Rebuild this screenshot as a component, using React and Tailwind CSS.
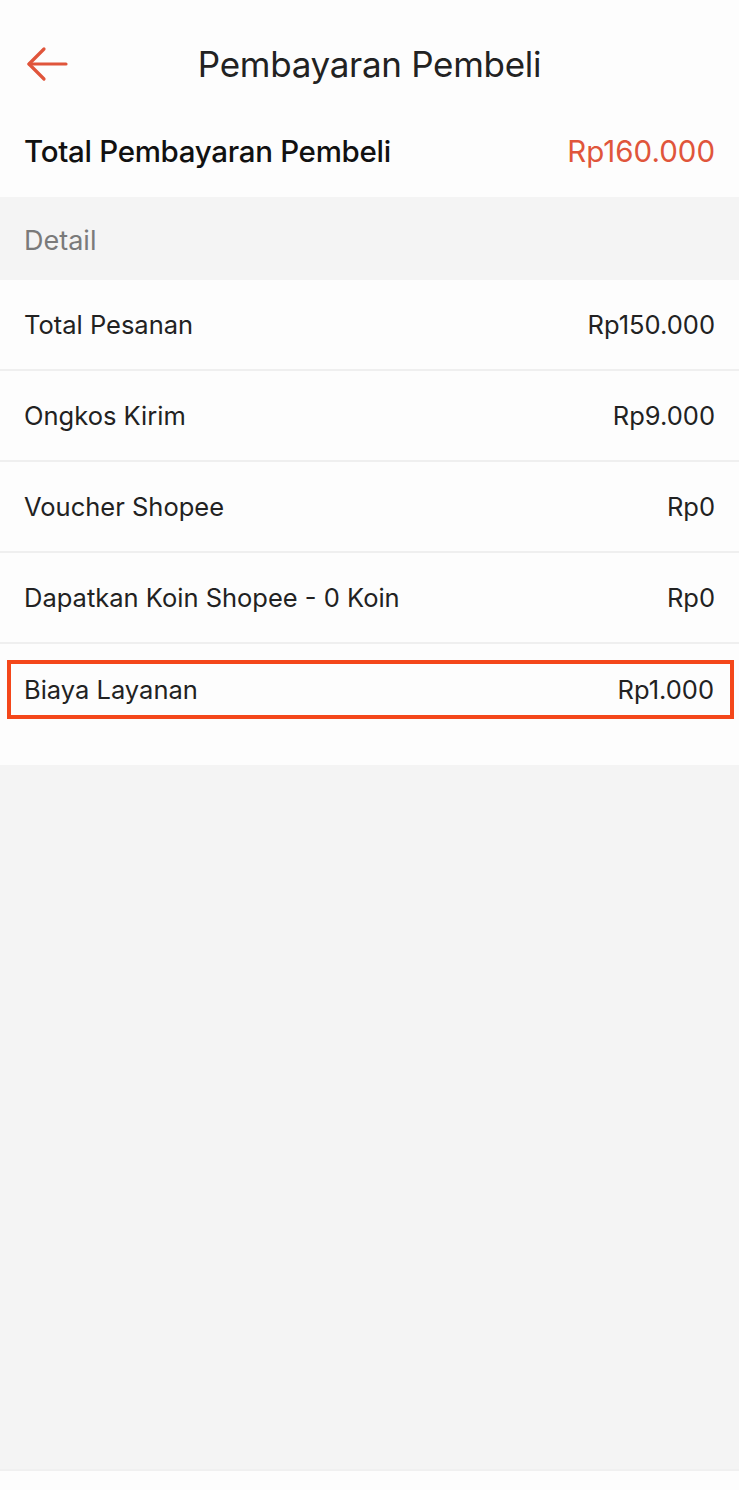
export default function App() {
  const rows = [
    ["Total Pesanan", "Rp150.000"],
    ["Ongkos Kirim", "Rp9.000"],
    ["Voucher Shopee", "Rp0"],
    ["Dapatkan Koin Shopee - 0 Koin", "Rp0"],
  ];
  return (
    <div className="w-[739px] h-[1490px] flex flex-col bg-[#f4f4f4] text-[#222]" style={{ fontFamily: "Inter, 'Noto Sans', sans-serif" }}>
      <div className="bg-[#fdfdfd] flex flex-col">
        <div className="relative h-[106px] pt-[44px] flex justify-center">
          <svg className="absolute left-[24px] top-[45px]" width="46" height="38" viewBox="0 0 46 38" fill="none" stroke="#e0553b" strokeWidth="3.2" strokeLinecap="round" strokeLinejoin="round">
            <path d="M42 19H5" />
            <path d="M20 4L5 19l15 15" />
          </svg>
          <span className="text-[35px] leading-[40px] text-[#222] tracking-[-0.3px]">Pembayaran Pembeli</span>
        </div>
        <div className="flex items-center justify-between px-[24px] h-[91px]">
          <span className="text-[29.5px] font-medium leading-none tracking-[-0.3px] text-[#111]">Total Pembayaran Pembeli</span>
          <span className="text-[29.5px] leading-none text-[#e0553b]">Rp160.000</span>
        </div>
      </div>
      <div className="h-[83px] flex items-center px-[24px] pt-[3px]">
        <span className="text-[27px] leading-none text-[#7a7a7a]">Detail</span>
      </div>
      <div className="bg-[#fdfdfd] flex flex-col">
        {rows.map(([l, r], i) => (
          <div key={i} className="h-[91px] flex items-center justify-between px-[24px] border-b-2 border-[#efefef]">
            <span className="text-[25.5px] leading-none">{l}</span>
            <span className="text-[25.5px] leading-none">{r}</span>
          </div>
        ))}
        <div className="pt-[16px] pb-[46px] pl-[7px] pr-[5px]">
          <div className="h-[59px] border-[4px] border-[#f4471a] flex items-center justify-between pl-[13px] pr-[16px]">
            <span className="text-[25.5px] leading-none">Biaya Layanan</span>
            <span className="text-[25.5px] leading-none">Rp1.000</span>
          </div>
        </div>
      </div>
      <div className="flex-1"></div>
      <div className="h-[21px] bg-[#fdfdfd] border-t-2 border-[#f0f0f0]"></div>
    </div>
  );
}
